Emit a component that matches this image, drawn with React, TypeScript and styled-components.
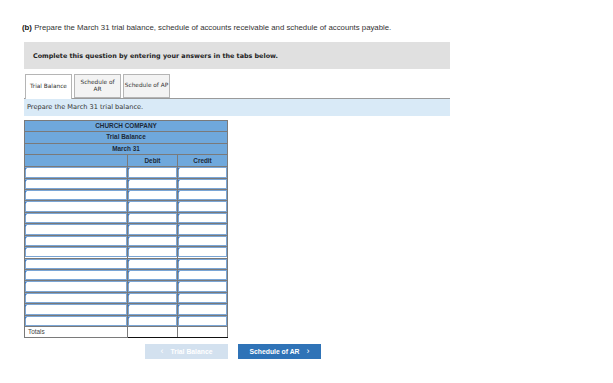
import styled, { createGlobalStyle } from "styled-components"

const Global = createGlobalStyle`
  body {
    margin: 0;
    background: #fff;
    font-family: "Liberation Sans", Arial, sans-serif;
    color: #222;
  }
`

const Page = styled.div`
  padding: 23px 0 0 22px;
  width: 613px;
  height: 383px;
  box-sizing: border-box;
`

const Title = styled.p`
  margin: 0;
  font-size: 7.8px;
  line-height: 10px;
  color: #333;
  white-space: nowrap;
  b { font-weight: 700; color: #111; }
`

const Content = styled.div`
  margin-left: 2px;
  width: 426px;
`

const Notice = styled.div`
  margin-top: 9px;
  height: 27px;
  background: #e0e0e0;
  display: flex;
  align-items: center;
  padding-left: 9px;
  font-family: "DejaVu Sans", Verdana, sans-serif;
  font-weight: 700;
  font-size: 6.4px;
  color: #222;
`

const Tabs = styled.div`
  margin-top: 4.5px;
  display: flex;
  gap: 2px;
  padding-left: 1px;
  height: 24px;
`

const Tab = styled.div<{ active?: boolean }>`
  width: 47px;
  box-sizing: border-box;
  border: 1px solid #b5b5b5;
  border-bottom: ${({ active }) => (active ? "none" : "1px solid #b5b5b5")};
  background: ${({ active }) => (active ? "#fff" : "#f3f3f3")};
  height: ${({ active }) => (active ? "25px" : "24px")};
  position: relative;
  z-index: 1;
  display: flex;
  align-items: center;
  justify-content: center;
  text-align: center;
  font-family: "DejaVu Sans", Verdana, sans-serif;
  font-size: 5.8px;
  line-height: 7px;
  color: #333;
  white-space: nowrap;
`

const Instruction = styled.div`
  border-top: 1px solid #9a9a9a;
  background: #d9eaf7;
  height: 17.5px;
  display: flex;
  align-items: center;
  padding-left: 3px;
  font-family: "DejaVu Sans", Verdana, sans-serif;
  font-size: 6.6px;
  color: #333;
`

const Table = styled.table`
  margin-top: 3.5px;
  width: 203px;
  border-collapse: collapse;
  table-layout: fixed;
  border: 1px solid #7a7a7a;
`

const HeadCell = styled.td`
  background: #6fa8dc;
  border: 1px solid #7a7a7a;
  height: 10.67px;
  padding: 0;
  text-align: center;
  font-weight: 700;
  font-size: 6.4px;
  line-height: 8px;
  color: #1d2a38;
`

const DataCell = styled.td`
  border: 1px solid #7a7a7a;
  height: 10.43px;
  padding: 0;
  background: #fff;
`

const Input = styled.div`
  position: relative;
  height: 8.4px;
  border: 1px solid #7ba6d6;
  background: #fff;
  &::before {
    content: "";
    position: absolute;
    left: -1px;
    top: 0;
    border-top: 2px solid #3b78c4;
    border-right: 2px solid transparent;
  }
`

const TotalCell = styled.td<{ label?: boolean }>`
  height: 10px;
  padding: 0 0 0 3px;
  border: 1px solid #7a7a7a;
  border-top: ${({ label }) => (label ? "1px solid #7a7a7a" : "1px solid #111")};
  border-bottom: ${({ label }) => (label ? "1px solid #7a7a7a" : "1px solid #111")};
  font-size: 6.4px;
  line-height: 8px;
  color: #444;
`

const Buttons = styled.div`
  margin: 6px 0 0 121px;
  display: flex;
  gap: 10px;
`

const NavButton = styled.div<{ disabled?: boolean }>`
  width: 83px;
  height: 15px;
  display: flex;
  align-items: center;
  justify-content: center;
  gap: 7px;
  background: ${({ disabled }) => (disabled ? "#d3e1ef" : "#2f73b7")};
  color: #fff;
  font-weight: 700;
  font-size: 6.8px;
`

const Chevron = styled.span`
  font-size: 9px;
  font-weight: 400;
  line-height: 1;
  margin-top: -1px;
`

const rows = Array.from({ length: 14 })

export default function App() {
  return (
    <Page>
      <Global />
      <Title>
        <b>(b)</b> Prepare the March 31 trial balance, schedule of accounts receivable and schedule of accounts payable.
      </Title>
      <Content>
        <Notice>Complete this question by entering your answers in the tabs below.</Notice>
        <Tabs>
          <Tab active>Trial Balance</Tab>
          <Tab>Schedule of<br />AR</Tab>
          <Tab>Schedule of AP</Tab>
        </Tabs>
        <Instruction>Prepare the March 31 trial balance.</Instruction>
        <Table>
          <colgroup>
            <col style={{ width: 103 }} />
            <col style={{ width: 50 }} />
            <col style={{ width: 50 }} />
          </colgroup>
          <tbody>
            <tr><HeadCell colSpan={3}>CHURCH COMPANY</HeadCell></tr>
            <tr><HeadCell colSpan={3}>Trial Balance</HeadCell></tr>
            <tr><HeadCell colSpan={3}>March 31</HeadCell></tr>
            <tr>
              <HeadCell />
              <HeadCell>Debit</HeadCell>
              <HeadCell>Credit</HeadCell>
            </tr>
            {rows.map((_, i) => (
              <tr key={i}>
                <DataCell><Input /></DataCell>
                <DataCell><Input /></DataCell>
                <DataCell><Input /></DataCell>
              </tr>
            ))}
            <tr>
              <TotalCell label>Totals</TotalCell>
              <TotalCell />
              <TotalCell />
            </tr>
          </tbody>
        </Table>
        <Buttons>
          <NavButton disabled><Chevron>‹</Chevron>Trial Balance</NavButton>
          <NavButton>Schedule of AR<Chevron>›</Chevron></NavButton>
        </Buttons>
      </Content>
    </Page>
  )
}
